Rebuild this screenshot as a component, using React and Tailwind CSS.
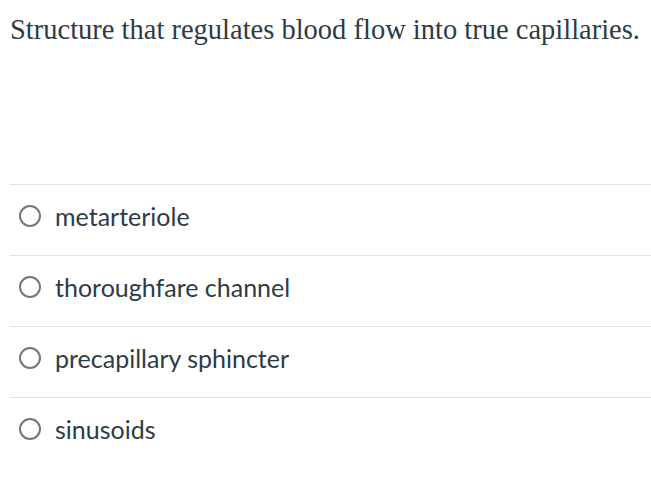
export default function App() {
  const answers = ["metarteriole", "thoroughfare channel", "precapillary sphincter", "sinusoids"];

  return (
    <div className="w-[651px] h-[477px] bg-white overflow-hidden">
      <div className="pl-[10px] pt-[12px] h-[184px]">
        <p className="text-[28.5px] leading-[36px] text-[#2d3b45] whitespace-nowrap" style={{ fontFamily: '"Liberation Serif", serif' }}>
          Structure that regulates blood flow into true capillaries.
        </p>
      </div>
      <div className="ml-[10px]">
        {answers.map((a) => (
          <div key={a} className="flex items-start h-[71px] border-t border-[#e2e2e2] pt-[15px]">
            <span className="mt-[5px] ml-[9px] w-[22px] h-[22px] rounded-full border-2 border-[#767676] shrink-0"></span>
            <span className="ml-[14px] text-[25px] leading-[32px] text-[#2d3b45]" style={{ fontFamily: "Lato, sans-serif" }}>
              {a}
            </span>
          </div>
        ))}
      </div>
    </div>
  );
}
